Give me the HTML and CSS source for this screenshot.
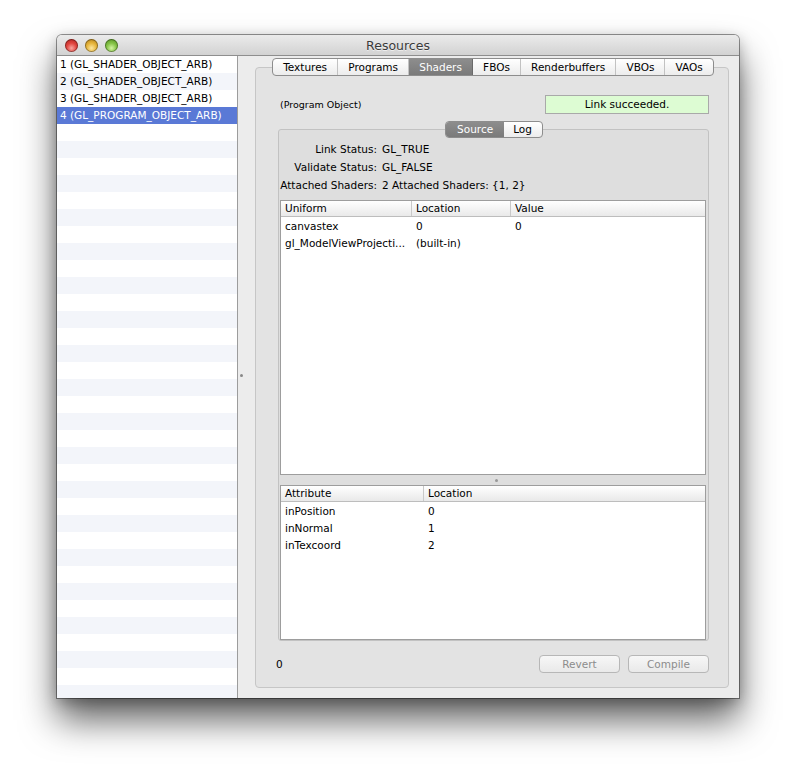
FILE: index.html
```html
<!DOCTYPE html>
<html>
<head>
<meta charset="utf-8">
<link rel="stylesheet" href="styles.css">
</head>
<body>
<div class="window">
  <div class="titlebar">
    <div class="lights">
      <span class="light red"></span>
      <span class="light yellow"></span>
      <span class="light green"></span>
    </div>
    <div class="title">Resources</div>
  </div>
  <div class="main">
    <div class="list">
      <div class="row">1 (GL_SHADER_OBJECT_ARB)</div>
      <div class="row">2 (GL_SHADER_OBJECT_ARB)</div>
      <div class="row">3 (GL_SHADER_OBJECT_ARB)</div>
      <div class="row selected">4 (GL_PROGRAM_OBJECT_ARB)</div>
    </div>
    <div class="pane">
      <span class="vgrip"></span>
      <div class="tabs">
        <span class="tab">Textures</span>
        <span class="tab">Programs</span>
        <span class="tab active">Shaders</span>
        <span class="tab">FBOs</span>
        <span class="tab">Renderbuffers</span>
        <span class="tab">VBOs</span>
        <span class="tab last">VAOs</span>
      </div>
      <div class="tabbox">
        <div class="header-row">
          <span class="objname">(Program Object)</span>
          <span class="status">Link succeeded.</span>
        </div>
        <div class="seg">
          <span class="segbtn active">Source</span>
          <span class="segbtn">Log</span>
        </div>
        <div class="group">
          <div class="props">
            <div class="prop"><span class="plabel">Link Status:</span><span>GL_TRUE</span></div>
            <div class="prop"><span class="plabel">Validate Status:</span><span>GL_FALSE</span></div>
            <div class="prop"><span class="plabel">Attached Shaders:</span><span>2 Attached Shaders: {1, 2}</span></div>
          </div>
          <div class="table uniforms">
            <div class="thead">
              <span class="c1">Uniform</span>
              <span class="c2">Location</span>
              <span class="c3">Value</span>
            </div>
            <div class="trow"><span class="c1">canvastex</span><span class="c2">0</span><span class="c3">0</span></div>
            <div class="trow"><span class="c1">gl_ModelViewProjecti...</span><span class="c2">(built-in)</span><span class="c3"></span></div>
          </div>
          <div class="splitter"><span class="grip"></span></div>
          <div class="table attribs">
            <div class="thead">
              <span class="a1">Attribute</span>
              <span class="a2">Location</span>
            </div>
            <div class="trow"><span class="a1">inPosition</span><span class="a2">0</span></div>
            <div class="trow"><span class="a1">inNormal</span><span class="a2">1</span></div>
            <div class="trow"><span class="a1">inTexcoord</span><span class="a2">2</span></div>
          </div>
        </div>
        <div class="footer">
          <span class="count">0</span>
          <span class="buttons">
            <span class="btn">Revert</span>
            <span class="btn">Compile</span>
          </span>
        </div>
      </div>
    </div>
  </div>
</div>
</body>
</html>
```

FILE: styles.css
```css
html, body {
  margin: 0;
  padding: 0;
  background: #ffffff;
}
body {
  font-family: "DejaVu Sans", "Liberation Sans", sans-serif;
  font-size: 10.5px;
  color: #000;
  width: 796px;
  height: 778px;
  overflow: hidden;
}
.window {
  margin: 35px 0 0 57px;
  width: 682px;
  height: 663px;
  display: flex;
  flex-direction: column;
  border-radius: 5px 5px 0 0;
  box-shadow: 0 0 0 1px rgba(0,0,0,0.4), 0 22px 36px rgba(0,0,0,0.62), 0 4px 14px rgba(0,0,0,0.25);
  background: #ececec;
}
.titlebar {
  height: 20px;
  display: grid;
  grid-template-areas: "bar";
  align-items: center;
  background: linear-gradient(#ebebeb, #d2d2d2);
  border-bottom: 1px solid #8e8e8e;
  border-radius: 5px 5px 0 0;
  flex: none;
}
.lights {
  grid-area: bar;
  display: flex;
  gap: 7px;
  padding-left: 8px;
}
.light {
  width: 13px;
  height: 13px;
  border-radius: 50%;
  box-shadow: inset 0 0 0 1px rgba(0,0,0,0.35);
}
.red { background: radial-gradient(circle at 50% 70%, #f9a6a0 0, #e0443e 45%, #a51d1a 100%); }
.yellow { background: radial-gradient(circle at 50% 70%, #fde7a0 0, #e6b43a 45%, #a77615 100%); }
.green { background: radial-gradient(circle at 50% 70%, #d5f5a3 0, #84c245 45%, #4c8a1d 100%); }
.title {
  grid-area: bar;
  text-align: center;
  font-size: 12.5px;
  color: #3a3a3a;
  text-shadow: 0 1px 0 rgba(255,255,255,0.6);
}
.main {
  flex: 1;
  display: flex;
  min-height: 0;
}
.list {
  width: 180px;
  flex: none;
  border-right: 1px solid #9c9c9c;
  background: repeating-linear-gradient(#ffffff 0, #ffffff 17px, #f3f5fa 17px, #f3f5fa 34px);
}
.row {
  height: 17px;
  line-height: 17px;
  padding-left: 3px;
  white-space: nowrap;
}
.row.selected {
  background: #5a79d6;
  color: #fff;
}
.pane {
  flex: 1;
  padding: 2px 10px 10px 17px;
  display: flex;
  flex-direction: column;
  position: relative;
}
.vgrip {
  position: absolute;
  left: 2px;
  top: 318px;
  width: 3px;
  height: 3px;
  border-radius: 50%;
  background: #888;
}
.tabs {
  align-self: center;
  display: flex;
  height: 16px;
  border: 1px solid #8d8d8d;
  border-radius: 4px;
  background: linear-gradient(#ffffff, #ececec);
  position: relative;
  z-index: 1;
  overflow: hidden;
  margin-left: 2px;
}
.tab {
  line-height: 16px;
  padding: 0 10.1px;
  border-right: 1px solid #c2c2c2;
}
.tab.last { border-right: none; }
.tab.active {
  background: linear-gradient(#8d8d8d, #7a7a7a);
  color: #fff;
  border-right-color: #6a6a6a;
}
.tabbox {
  flex: 1;
  margin-top: -9px;
  border: 1px solid #c6c6c6;
  border-radius: 4px;
  background: #e3e3e3;
  padding: 27px 19px 14px 22px;
  display: flex;
  flex-direction: column;
}
.header-row {
  display: flex;
  justify-content: space-between;
  align-items: center;
  height: 19px;
}
.objname {
  padding-left: 2px;
  font-size: 9.5px;
}
.status {
  width: 162px;
  height: 17px;
  line-height: 17px;
  text-align: center;
  background: #ddfcd3;
  border: 1px solid #a9a9a9;
}
.seg {
  align-self: center;
  display: flex;
  height: 15px;
  margin-top: 7px;
  margin-left: 1px;
  border: 1px solid #8d8d8d;
  border-radius: 4px;
  overflow: hidden;
  background: linear-gradient(#ffffff, #ececec);
  position: relative;
  z-index: 1;
}
.segbtn {
  line-height: 15px;
  padding: 0 10px 0 9px;
}
.segbtn.active {
  background: linear-gradient(#8d8d8d, #7a7a7a);
  color: #fff;
  padding: 0 11px;
}
.group {
  flex: 1;
  margin-top: -9px;
  border: 1px solid #c2c2c2;
  border-radius: 3px;
  background: #dedede;
  padding: 11px 2px 0 1px;
  display: flex;
  flex-direction: column;
}
.props {
  display: flex;
  flex-direction: column;
  gap: 1px;
}
.prop {
  display: flex;
  height: 17px;
  line-height: 17px;
  white-space: nowrap;
}
.plabel {
  width: 97px;
  flex: none;
  text-align: right;
  padding-right: 5px;
}
.table {
  background: #fff;
  border: 1px solid #9d9d9d;
}
.uniforms {
  margin-top: 6px;
  height: 273px;
  flex: none;
}
.attribs {
  flex: 1;
}
.thead {
  display: flex;
  height: 15px;
  line-height: 15px;
  background: linear-gradient(#ffffff, #e9e9e9);
  border-bottom: 1px solid #bdbdbd;
  margin-bottom: 1px;
}
.thead span {
  border-right: 1px solid #c9c9c9;
}
.thead span:last-child { border-right: none; }
.trow {
  display: flex;
  height: 17px;
  line-height: 17px;
}
.c1, .c2, .c3, .a1, .a2 {
  padding-left: 4px;
  white-space: nowrap;
  overflow: hidden;
  box-sizing: border-box;
}
.c1 { width: 131px; }
.c2 { width: 99px; }
.c3 { flex: 1; }
.a1 { width: 143px; }
.a2 { flex: 1; }
.splitter {
  height: 10px;
  flex: none;
  display: flex;
  justify-content: center;
  align-items: center;
}
.grip {
  width: 3px;
  height: 3px;
  border-radius: 50%;
  background: #999;
  margin-left: 7px;
}
.footer {
  display: flex;
  justify-content: space-between;
  align-items: center;
  margin-top: 14px;
}
.count {
  margin-left: -2px;
}
.buttons {
  display: flex;
  gap: 8px;
}
.btn {
  width: 79px;
  height: 16px;
  line-height: 16px;
  text-align: center;
  border: 1px solid #b7b7b7;
  border-radius: 4px;
  background: linear-gradient(#f7f7f7, #e9e9e9);
  color: #8c8c8c;
}
```
